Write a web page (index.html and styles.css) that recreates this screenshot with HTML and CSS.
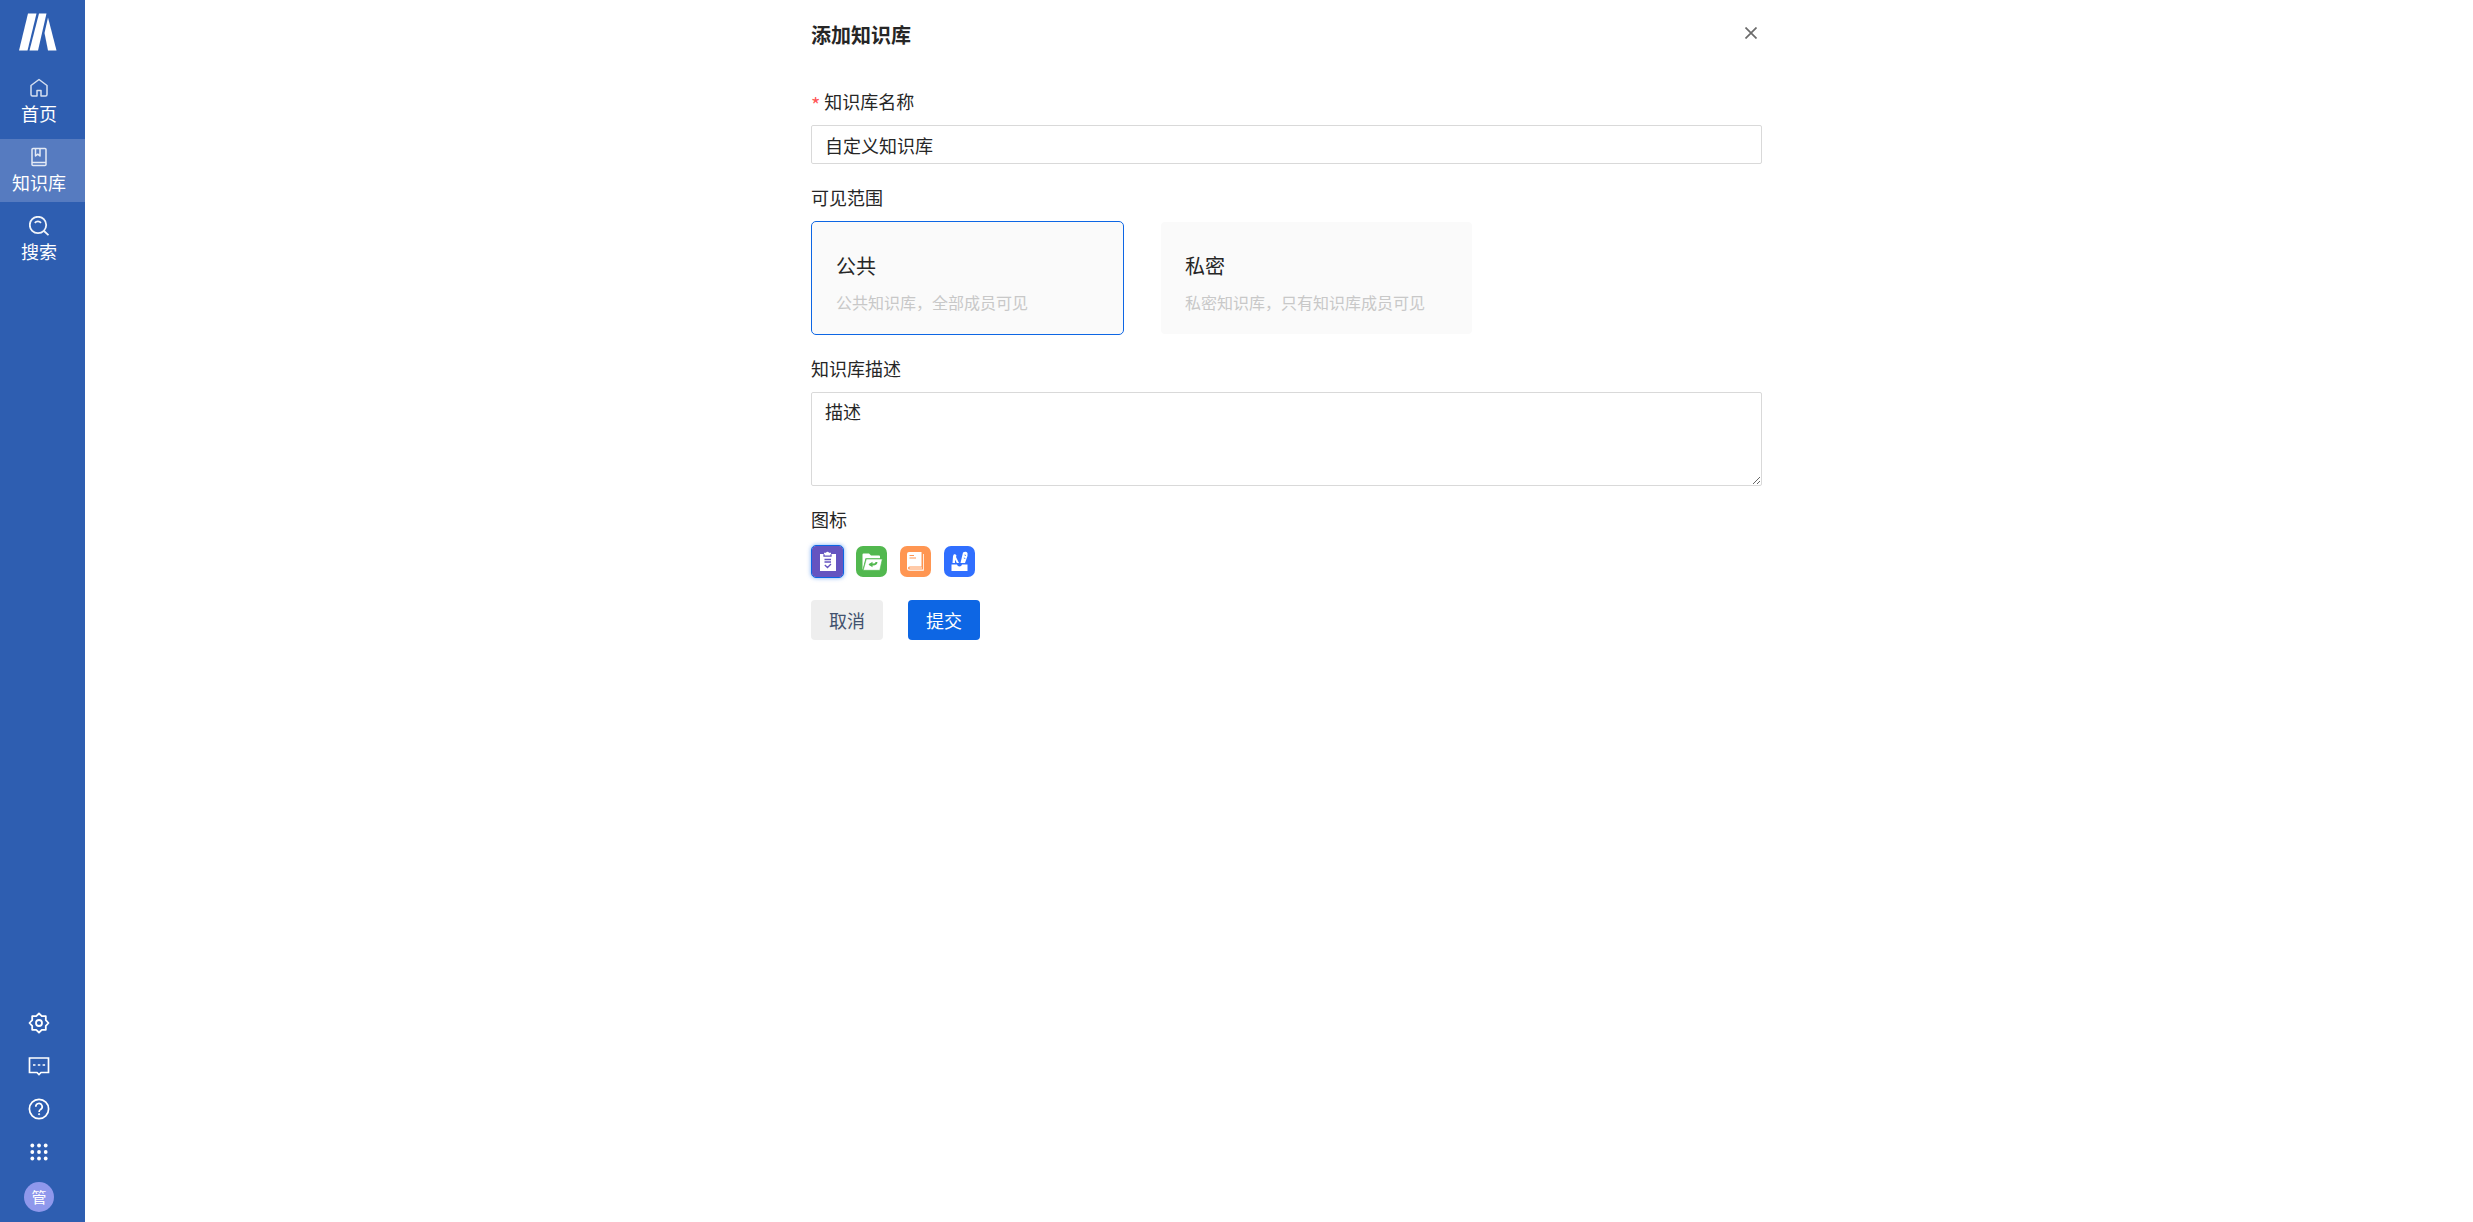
FILE: index.html
```html
<!DOCTYPE html>
<html lang="zh-CN">
<head>
<meta charset="utf-8">
<meta name="viewport" content="width=device-width, initial-scale=1">
<title>添加知识库</title>
<link rel="stylesheet" href="styles.css">
</head>
<body>
<div class="app">
  <aside class="sidebar">
    <a class="logo" href="#" aria-label="主页">
      <svg width="38" height="38" viewBox="0 0 38 38" fill="#fff"><path d="M9 0.5h8.500L8.500 37.500H0z"/><path d="M20 0.500h7.500L19 37.500H10.500z"/><path d="M29 4.500L37.500 37.500H29L25.500 20z"/></svg>
    </a>
    <nav class="nav">
      <a class="nav-item" href="#">
        <svg class="icon" viewBox="0 0 20 20" fill="none" stroke="#d5dff0" stroke-width="1.500" stroke-linejoin="round"><path d="M2 7.500L10 1.500l8 6V16.500a1.500 1.500 0 0 1-1.500 1.500H12V12.500H8V18H3.500A1.500 1.500 0 0 1 2 16.500z"/></svg>
        <span>首页</span>
      </a>
      <a class="nav-item active" href="#" aria-current="page">
        <svg class="icon" viewBox="0 0 20 20" fill="none" stroke="#e4eaf5" stroke-width="1.500" stroke-linejoin="round"><rect x="3" y="1.500" width="14" height="17" rx="1"/><path d="M3 15.500h14M6.500 1.500V9L8.800 7.200 11 9V1.500"/></svg>
        <span>知识库</span>
      </a>
      <a class="nav-item" href="#">
        <svg class="icon" viewBox="0 0 20 20" fill="none" stroke="#f0f4fa" stroke-width="1.800"><circle cx="9" cy="9" r="8.200"/><path d="M15 15l4.500 4.200M5.800 6.800a4.200 4.200 0 0 1 6.200 0"/></svg>
        <span>搜索</span>
      </a>
    </nav>
    <div class="tools">
      <a class="tool" href="#" aria-label="设置">
        <svg viewBox="0 0 22 22" fill="none" stroke="#fff" stroke-width="1.800" stroke-linejoin="round"><path d="M11 1.500L13.800 4.200H17.800V8.200L20.500 11 17.800 13.800V17.800H13.800L11 20.500 8.200 17.800H4.200V13.800L1.500 11 4.200 8.200V4.200H8.200z"/><circle cx="11" cy="11" r="3"/></svg>
      </a>
      <a class="tool" href="#" aria-label="消息">
        <svg viewBox="0 0 22 22" fill="none" stroke="#fff" stroke-width="1.700"><path d="M1.500 3h19v14.500H13L11 19.500 9 17.500H1.500z"/><path d="M5 10h2.500M9.800 10h2.500M14.600 10h2.500"/></svg>
      </a>
      <a class="tool" href="#" aria-label="帮助">
        <svg viewBox="0 0 22 22" fill="none" stroke="#fff" stroke-width="1.700"><circle cx="11" cy="11" r="9.600"/><path d="M7.800 8.800a3.200 3.200 0 1 1 4.800 2.600c-1.100.7-1.500 1.200-1.500 2.500"/><circle cx="11.100" cy="16.200" r=".6" fill="#fff" stroke-width="1"/></svg>
      </a>
      <a class="tool" href="#" aria-label="应用">
        <svg viewBox="0 0 22 22" fill="#fff"><circle cx="4.300" cy="4.500" r="1.900"/><circle cx="11" cy="4.500" r="1.900"/><circle cx="17.700" cy="4.500" r="1.900"/><circle cx="4.300" cy="11" r="1.900"/><circle cx="11" cy="11" r="1.900"/><circle cx="17.700" cy="11" r="1.900"/><circle cx="4.300" cy="17.500" r="1.900"/><circle cx="11" cy="17.500" r="1.900"/><circle cx="17.700" cy="17.500" r="1.900"/></svg>
      </a>
    </div>
    <button class="avatar" type="button">管</button>
  </aside>

  <main class="main">
    <form class="panel">
      <header class="panel-head">
        <h1 class="title">添加知识库</h1>
        <button class="close" type="button" aria-label="关闭">
          <svg width="12" height="12" viewBox="0 0 12 12" stroke="#6b6b6b" stroke-width="1.700"><path d="M.5.5l11 11M11.500.5l-11 11"/></svg>
        </button>
      </header>

      <div class="field">
        <label class="label" for="name"><span class="required">*</span>知识库名称</label>
        <input class="control" id="name" type="text" value="自定义知识库" required>
      </div>

      <div class="field" role="radiogroup" aria-labelledby="scope-label">
        <div class="label" id="scope-label">可见范围</div>
        <div class="cards">
          <label class="card">
            <input class="hidden-radio" type="radio" name="scope" checked>
            <span class="card-title">公共</span>
            <span class="card-desc">公共知识库，全部成员可见</span>
          </label>
          <label class="card">
            <input class="hidden-radio" type="radio" name="scope">
            <span class="card-title">私密</span>
            <span class="card-desc">私密知识库，只有知识库成员可见</span>
          </label>
        </div>
      </div>

      <div class="field">
        <label class="label" for="desc">知识库描述</label>
        <textarea class="control area" id="desc">描述</textarea>
      </div>

      <div class="field" role="radiogroup" aria-labelledby="icon-label">
        <div class="label" id="icon-label">图标</div>
        <div class="tiles">
          <label class="tile purple">
            <input class="hidden-radio" type="radio" name="icon" aria-label="清单" checked>
            <svg viewBox="0 0 31 31"><path fill="#fff" d="M8 8h4V6.800h2a1.600 1.600 0 0 1 3 0h2V8h5v17H8z"/><path fill="none" stroke="#6554c0" stroke-width="1.300" d="M12 8.200v2h7v-2M12.500 13.500h6.500M12.500 16h6.500M12.800 19l2.700 2.500 3.500-3.500"/></svg>
          </label>
          <label class="tile green">
            <input class="hidden-radio" type="radio" name="icon" aria-label="文件夹">
            <svg viewBox="0 0 31 31"><path fill="#fff" d="M6.500 24V8.500q0-1 1-1H13l2 2h8q1 0 1 1v1.700H9.500z"/><path fill="#fff" stroke="#52b84f" stroke-width=".6" d="M10.300 13H26.300L23.800 24.300H7.200z"/><path fill="none" stroke="#52b84f" stroke-width="1.900" d="M13.500 18.500h3.500q3.500 0 3.500-2.500"/><path fill="#52b84f" d="M12.500 18.500l4-2.700v5.400z"/></svg>
          </label>
          <label class="tile orange">
            <input class="hidden-radio" type="radio" name="icon" aria-label="书籍">
            <svg viewBox="0 0 31 31"><path fill="#fff" d="M9 6h12.500v14.500H9.500a1.500 1.500 0 0 0 0 3H23V8h.8v16.800H9.500A2.500 2.500 0 0 1 7 22.300V8a2 2 0 0 1 2-2z"/><path stroke="#fff" stroke-width="1" d="M9.500 22H22"/><path stroke="#ff9652" stroke-width="1.200" d="M9.500 9.500h4.500M9.500 12h6.500"/></svg>
          </label>
          <label class="tile blue">
            <input class="hidden-radio" type="radio" name="icon" aria-label="工具箱">
            <svg viewBox="0 0 31 31"><path fill="#fff" d="M7.500 18.500h5.500q.5 2 2.500 2t2.500-2H23.500V25h-16z"/><path fill="#fff" d="M9 10.500Q9 8 11 8l1.500 1.500-.5 1.500 3 6H12.800L11 13.500V17H8.500zM19 6.500q3-1.500 4.500.5v3L21 17h-4.500z"/><path stroke="#306fff" stroke-width=".9" d="M20.500 9l1.500.5M19.800 12l1.500.5"/></svg>
          </label>
        </div>
      </div>

      <div class="actions">
        <button class="btn" type="button">取消</button>
        <button class="btn primary" type="submit">提交</button>
      </div>
    </form>
  </main>
</div>
</body>
</html>
```
FILE: styles.css
```css
* {
  box-sizing: border-box;
}

body {
  margin: 0;
  font-family: "Noto Sans CJK SC", sans-serif;
  font-size: 18px;
  line-height: 24px;
  color: #262626;
  background: #fff;
}

button,
input,
textarea {
  font: inherit;
  color: inherit;
}

.app {
  display: flex;
  min-height: 100vh;
}

/* Sidebar */
.sidebar {
  display: flex;
  flex-direction: column;
  flex: none;
  width: 85px;
  padding: 13px 0 10px;
  color: #fff;
  background: #2e5eb1;
}

.logo {
  display: flex;
  justify-content: center;
  padding-right: 9px;
  margin-bottom: 19px;
}

.nav {
  display: flex;
  flex-direction: column;
  gap: 6px;
}

.nav-item {
  display: flex;
  flex-direction: column;
  align-items: center;
  gap: 3px;
  padding: 8px 7px 8px 0;
  color: #fff;
  text-decoration: none;
}

.nav-item.active {
  background: #567bc0;
}

.icon {
  width: 20px;
  height: 20px;
}

.tools {
  display: flex;
  flex-direction: column;
  align-items: center;
  gap: 21px;
  padding-right: 7px;
  margin: auto 0 19px;
}

.tool {
  display: flex;
  width: 22px;
  height: 22px;
}

.avatar {
  width: 30px;
  height: 30px;
  padding: 0;
  margin-left: 24px;
  border: 0;
  border-radius: 50%;
  font-size: 15px;
  line-height: 30px;
  color: #fff;
  background: #8f98ec;
}

/* Form panel */
.main {
  flex: 1;
  padding: 20px 0 20px 15px;
}

.panel {
  display: flex;
  flex-direction: column;
  gap: 21px;
  max-width: 951px;
  margin: 0 auto;
}

.panel-head {
  display: flex;
  align-items: center;
  justify-content: space-between;
  padding-right: 5px;
  margin-bottom: 18px;
}

.title {
  margin: 0;
  font-size: 20px;
  font-weight: 700;
  line-height: 30px;
}

.close {
  display: flex;
  padding: 0 0 4px;
  border: 0;
  background: none;
}

.field {
  display: flex;
  flex-direction: column;
  gap: 12px;
}

.label {
  height: 24px;
}

.required {
  margin-right: 4px;
  font-size: 20px;
  line-height: 20px;
  vertical-align: -4px;
  color: #ff5656;
}

.control {
  width: 100%;
  height: 39px;
  padding: 0 13px;
  border: 1px solid #d9d9d9;
  border-radius: 2px;
  background: #fff;
}

.area {
  display: block;
  height: 94px;
  padding: 6px 13px;
  resize: vertical;
}

.hidden-radio {
  position: absolute;
  margin: 0;
  opacity: 0;
}

.cards {
  display: flex;
  gap: 36px;
}

.card {
  display: flex;
  flex-direction: column;
  gap: 9px;
  width: 313px;
  padding: 29px 24px 20px;
  border: 1px solid transparent;
  border-radius: 5px;
  background: #fafafa padding-box;
}

.card:has(:checked) {
  border-color: #0d66e4;
}

.card-title {
  font-size: 20px;
  line-height: 30px;
}

.card-desc {
  font-size: 16px;
  color: #c8c8c8;
}

.tiles {
  display: flex;
  gap: 11px;
  padding: 2px 0 1px;
}

.tile {
  display: flex;
  width: 33px;
  height: 33px;
  border: 1px solid transparent;
  border-radius: 8px;
  background-clip: padding-box;
}

.tile:has(:checked) {
  border-color: #0d66e4;
  border-radius: 5px;
  box-shadow: 0 0 4px #0d66e488;
}

.purple { background-color: #6554c0; }
.green { background-color: #52b84f; }
.orange { background-color: #ff9652; }
.blue { background-color: #306fff; }

.actions {
  display: flex;
  gap: 25px;
}

.btn {
  height: 40px;
  padding: 0 18px;
  border: 0;
  border-radius: 4px;
  color: #42526e;
  background: #eee;
}

.btn.primary {
  color: #fff;
  background: #0d66e4;
}
```
